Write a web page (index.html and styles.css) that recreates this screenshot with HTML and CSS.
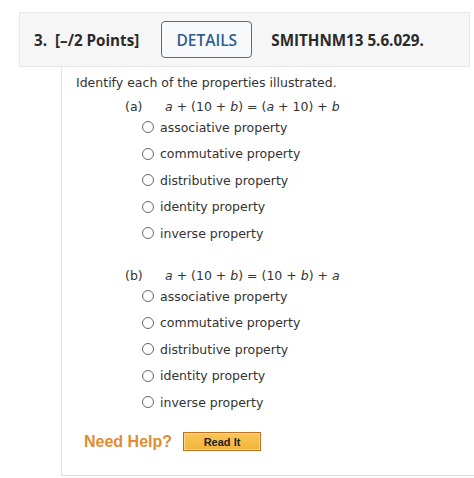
FILE: index.html
```html
<!DOCTYPE html>
<html>
<head>
<meta charset="utf-8">
<link rel="stylesheet" href="styles.css">
</head>
<body>
<div class="header">
  <span class="qnum">3.</span>
  <span class="points">[–/2 Points]</span>
  <span class="details">DETAILS</span>
  <span class="code">SMITHNM13 5.6.029.</span>
</div>
<div class="content">
  <p class="prompt">Identify each of the properties illustrated.</p>
  <div class="part">
    <div class="eq"><span class="label">(a)</span><span class="expr"><i>a</i> + (10 + <i>b</i>) = (<i>a</i> + 10) + <i>b</i></span></div>
    <ul class="opts">
      <li><span class="radio"></span>associative property</li>
      <li><span class="radio"></span>commutative property</li>
      <li><span class="radio"></span>distributive property</li>
      <li><span class="radio"></span>identity property</li>
      <li><span class="radio"></span>inverse property</li>
    </ul>
  </div>
  <div class="part partb">
    <div class="eq"><span class="label">(b)</span><span class="expr"><i>a</i> + (10 + <i>b</i>) = (10 + <i>b</i>) + <i>a</i></span></div>
    <ul class="opts">
      <li><span class="radio"></span>associative property</li>
      <li><span class="radio"></span>commutative property</li>
      <li><span class="radio"></span>distributive property</li>
      <li><span class="radio"></span>identity property</li>
      <li><span class="radio"></span>inverse property</li>
    </ul>
  </div>
  <div class="help">
    <span class="needhelp">Need Help?</span>
    <span class="readit">Read It</span>
  </div>
</div>
</body>
</html>
```
FILE: styles.css
```css
html, body {
  margin: 0;
  padding: 0;
  background: #ffffff;
}
body {
  padding-top: 12px;
  width: 474px;
  height: 478px;
  overflow: hidden;
  box-sizing: border-box;
}
.header {
  margin-left: 19px;
  width: 451px;
  height: 55px;
  box-sizing: border-box;
  background: #f6f6f6;
  border: 1px solid #e8e8e8;
  display: flex;
  align-items: center;
  font-family: "Open Sans", sans-serif;
  font-weight: 700;
  font-size: 15.2px;
  color: #2a2a2a;
}
.qnum {
  margin-left: 14px;
}
.points {
  margin-left: 8px;
}
.details {
  margin-left: 22px;
  width: 91px;
  height: 37px;
  box-sizing: border-box;
  border: 1.5px solid #4d6e8f;
  border-radius: 4px;
  display: flex;
  align-items: center;
  justify-content: center;
  color: #2f5f8f;
  font-weight: 600;
  font-size: 15.5px;
  background: #f8f9fa;
}
.code {
  margin-left: 19px;
}
.content {
  margin-left: 61px;
  height: 408px;
  border-left: 1px solid #e2e2e2;
  border-bottom: 1px solid #e2e2e2;
  padding-left: 14px;
  font-family: "DejaVu Sans", Verdana, sans-serif;
  font-size: 12.5px;
  color: #333333;
}
.prompt {
  margin: 0;
  padding-top: 7px;
  line-height: 18px;
}
.part {
  margin-left: 49px;
  margin-top: 6px;
}
.partb {
  margin-top: 25px;
}
.eq {
  display: flex;
  line-height: 18px;
}
.label {
  width: 40px;
}
.expr i {
  font-style: italic;
}
.opts {
  list-style: none;
  margin: 0;
  padding: 2px 0 0 17px;
}
.opts li {
  display: flex;
  align-items: center;
  height: 18px;
  margin-bottom: 8.5px;
}
.radio {
  width: 10px;
  height: 10px;
  border: 1px solid #666;
  border-radius: 50%;
  margin-right: 6px;
  flex: none;
}
.help {
  display: flex;
  align-items: center;
  margin-top: 21px;
  margin-left: 8px;
}
.needhelp {
  font-family: "Liberation Sans", Arial, sans-serif;
  font-weight: 700;
  font-size: 16px;
  color: #e08c30;
}
.readit {
  margin-left: 11px;
  width: 78px;
  height: 19px;
  box-sizing: border-box;
  border: 1px solid #c07020;
  background: linear-gradient(#f9c65a, #f2b43a);
  box-shadow: inset 0 0 0 1px #fbd98a;
  display: flex;
  align-items: center;
  justify-content: center;
  font-family: "Liberation Sans", Arial, sans-serif;
  font-weight: 700;
  font-size: 11px;
  color: #222;
}
```
